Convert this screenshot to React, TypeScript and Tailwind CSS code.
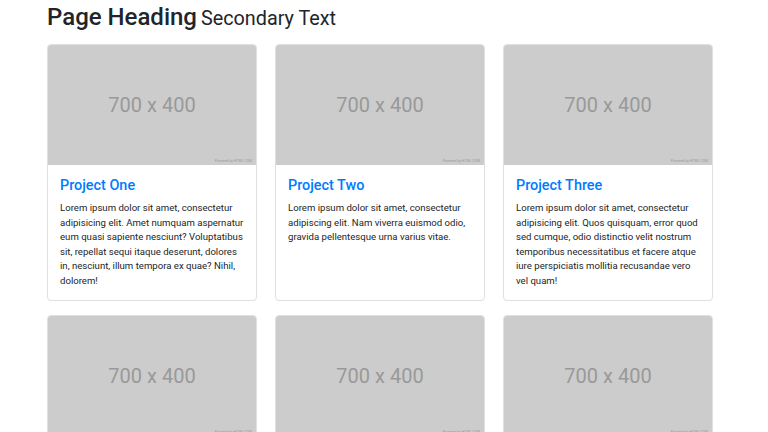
const projects = [
  {
    title: 'Project One',
    text: 'Lorem ipsum dolor sit amet, consectetur adipisicing elit. Amet numquam aspernatur eum quasi sapiente nesciunt? Voluptatibus sit, repellat sequi itaque deserunt, dolores in, nesciunt, illum tempora ex quae? Nihil, dolorem!',
  },
  {
    title: 'Project Two',
    text: 'Lorem ipsum dolor sit amet, consectetur adipiscing elit. Nam viverra euismod odio, gravida pellentesque urna varius vitae.',
  },
  {
    title: 'Project Three',
    text: 'Lorem ipsum dolor sit amet, consectetur adipisicing elit. Quos quisquam, error quod sed cumque, odio distinctio velit nostrum temporibus necessitatibus et facere atque iure perspiciatis mollitia recusandae vero vel quam!',
  },
  { title: 'Project Four', text: 'Lorem ipsum dolor sit amet, consectetur adipisicing elit.' },
  { title: 'Project Five', text: 'Lorem ipsum dolor sit amet, consectetur adipisicing elit.' },
  { title: 'Project Six', text: 'Lorem ipsum dolor sit amet, consectetur adipisicing elit.' },
];

export default function App() {
  return (
    <div
      className="min-h-screen h-[432px] overflow-hidden bg-white pl-[47px] text-[#212529]"
      style={{ fontFamily: 'Roboto, "Liberation Sans", sans-serif' }}
    >
      {/* Heading */}
      <h1 className="pt-[3px] pb-[10px] leading-[28px]">
        <span className="text-[24px] font-medium">Page Heading</span>{' '}
        <span className="text-[19.8px]">Secondary Text</span>
      </h1>

      {/* Cards */}
      <div className="grid grid-cols-[210px_210px_210px] gap-x-[18px] gap-y-[14px]">
        {projects.map((p) => (
          <ProjectCard key={p.title} title={p.title} text={p.text} />
        ))}
      </div>
    </div>
  );
}

function ProjectCard({ title, text }: { title: string; text: string }) {
  return (
    <div className="flex flex-col rounded-[4px] border border-[#dfdfdf] bg-white overflow-hidden">
      <div className="relative flex h-[120px] items-center justify-center bg-[#cccccc]">
        <span className="text-[20px] text-[#999999]">700 x 400</span>
        <span className="absolute bottom-[1px] right-[4px] text-[3.5px] text-[#9a9a9a]">
          Powered by HTML.COM
        </span>
      </div>
      <div className="p-[12px]">
        <h4 className="text-[14.4px] font-medium leading-[17.28px] text-[#007bff] mb-[7.2px]">
          {title}
        </h4>
        <p className="text-[9.6px] leading-[14.4px] text-[#212529]">{text}</p>
      </div>
    </div>
  );
}
